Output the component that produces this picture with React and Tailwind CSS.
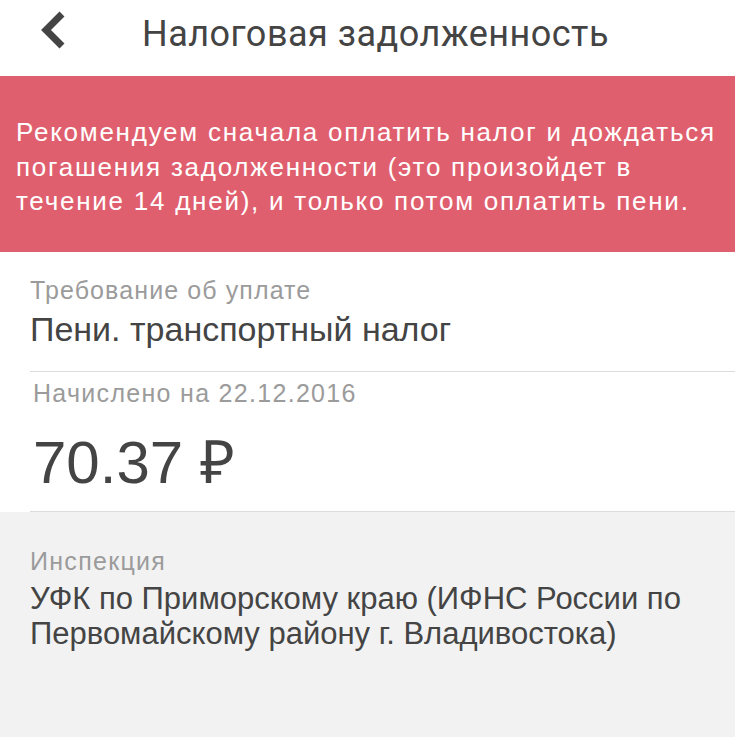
export default function App() {
    return (
        <div className="min-h-screen w-full bg-[#f2f2f2] flex flex-col" style={{ fontFamily: "'Liberation Sans', Arial, sans-serif" }}>
            {/* header */}
            <div className="h-[76px] bg-white flex items-start shrink-0">
                <div className="w-[142px] pl-[36px] pt-[10px]">
                    <svg width="30" height="40" viewBox="0 0 30 40" className="text-[#444]">
                        <path d="M26 4 L10 20 L26 36" fill="none" stroke="currentColor" strokeWidth="7" strokeLinecap="butt" strokeLinejoin="miter" />
                    </svg>
                </div>
                <h1 className="pt-[16px] text-[36px] text-[#444] leading-[36px] tracking-[0.5px]" style={{ fontFamily: "Roboto, 'Liberation Sans', sans-serif" }}>
                    Налоговая задолженность
                </h1>
            </div>

            {/* warning banner */}
            <div className="h-[176px] bg-[#e05f6e] pl-[16px] pr-[6px] pt-[6px] flex items-center shrink-0">
                <p className="text-white text-[26px] leading-[34.5px] tracking-[1.75px]">
                    Рекомендуем сначала оплатить налог и дождаться погашения задолженности (это произойдет в течение 14 дней), и только потом оплатить пени.
                </p>
            </div>

            {/* details */}
            <div className="bg-white shrink-0 pl-[30px]">
                <div className="pt-[23px] pb-[22px] border-b border-[#dcdcdc]">
                    <div className="text-[25px] leading-[30px] tracking-[1.1px] text-[#9b9b9b]">Требование об уплате</div>
                    <div className="mt-[4px] text-[34px] leading-[40px] text-[#444]">Пени. транспортный налог</div>
                </div>
                <div className="pt-[6px] pb-[13px] pl-[3px] border-b border-[#dcdcdc]">
                    <div className="text-[25px] leading-[30px] tracking-[1.3px] text-[#9b9b9b]">Начислено на 22.12.2016</div>
                    <div className="mt-[20px] text-[60px] leading-[70px] text-[#444]">70.37 ₽</div>
                </div>
            </div>

            <div className="pl-[30px] pr-[16px] pt-[34px]">
                <div className="text-[25px] leading-[30px] tracking-[1.3px] text-[#9b9b9b]">Инспекция</div>
                <div className="mt-[5px] text-[31px] leading-[35px] text-[#444]">
                    УФК по Приморскому краю (ИФНС России по Первомайскому району г. Владивостока)
                </div>
            </div>
        </div>
    );
}
